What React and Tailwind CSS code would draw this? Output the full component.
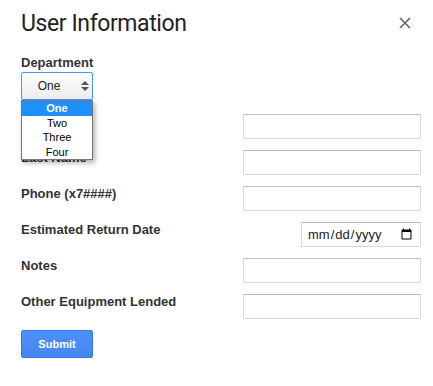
import React from 'react';

const fields = [
  { label: 'First Name', type: 'text' },
  { label: 'Last Name', type: 'text' },
  { label: 'Phone (x7####)', type: 'text' },
  { label: 'Estimated Return Date', type: 'date' },
  { label: 'Notes', type: 'text' },
  { label: 'Other Equipment Lended', type: 'text' },
];

const options = ['One', 'Two', 'Three', 'Four'];

const App = () => {
  return (
    <div className="w-[433px] h-[386px] bg-white pl-[21px] pr-[12px] pt-[10px] font-['Liberation_Sans',Arial,sans-serif] text-[#333]">
      <div className="flex items-start justify-between">
        <h1 className="font-['Roboto',sans-serif] text-[23px] leading-[28px] tracking-[-0.4px] font-normal text-[#222]">
          User Information
        </h1>
        <button className="mt-[7px] mr-[10px] text-[#666]" aria-label="Close">
          <svg width="12" height="12" viewBox="0 0 12 12" fill="none" stroke="currentColor" strokeWidth="1.6">
            <path d="M1 1l10 10M11 1L1 11" />
          </svg>
        </button>
      </div>

      <div className="relative mt-[17px]">
        <label className="block text-[13px] leading-4 font-bold">Department</label>
        <div className="mt-[1px] w-[72px] h-[28px] rounded-[2px] border border-[#4d90fe] bg-gradient-to-b from-white to-[#ececec] flex items-center relative">
          <span className="flex-1 text-center text-[12px] text-[#222] pr-[16px]">One</span>
          <span className="absolute right-[3px] top-[8px] flex flex-col gap-[2px]">
            <span className="w-0 h-0 border-l-[4px] border-r-[4px] border-b-[4.5px] border-l-transparent border-r-transparent border-b-[#555]" />
            <span className="w-0 h-0 border-l-[4px] border-r-[4px] border-t-[4.5px] border-l-transparent border-r-transparent border-t-[#555]" />
          </span>
        </div>

        <div className="absolute left-0 top-[45px] z-10 w-[72px] border border-[#767676] bg-white shadow-[2px_3px_5px_rgba(0,0,0,0.3)]">
          {options.map((o, i) => (
            <div
              key={o}
              className={
                i === 0
                  ? 'h-[14.5px] leading-[14.5px] text-center text-[11px] font-bold bg-[#1e90ff] text-white'
                  : 'h-[14.5px] leading-[14.5px] text-center text-[11px] text-black'
              }
            >
              {o}
            </div>
          ))}
        </div>

        <div className="mt-[14px] flex flex-col gap-[11px]">
          {fields.map((f) => (
            <div key={f.label} className="flex items-start justify-between">
              <label className="text-[13px] leading-4 font-bold">{f.label}</label>
              {f.type === 'date' ? (
                <input
                  type="date"
                  className="w-[120px] h-[25px] border border-[#d9d9d9] border-t-[#c0c0c0] pl-[5px] pr-[5px] text-[13px] text-[#222] font-['Liberation_Sans',Arial,sans-serif]"
                />
              ) : (
                <input
                  type="text"
                  className="w-[178px] h-[25px] border border-[#d9d9d9] border-t-[#c0c0c0] px-[6px] text-[13px]"
                />
              )}
            </div>
          ))}
        </div>

        <button className="mt-[11px] w-[72px] h-[28px] rounded-[2px] border border-[#3079ed] bg-gradient-to-b from-[#4d90fe] to-[#4787ed] text-white text-[11px] font-bold">
          Submit
        </button>
      </div>
    </div>
  );
};

export default App;
